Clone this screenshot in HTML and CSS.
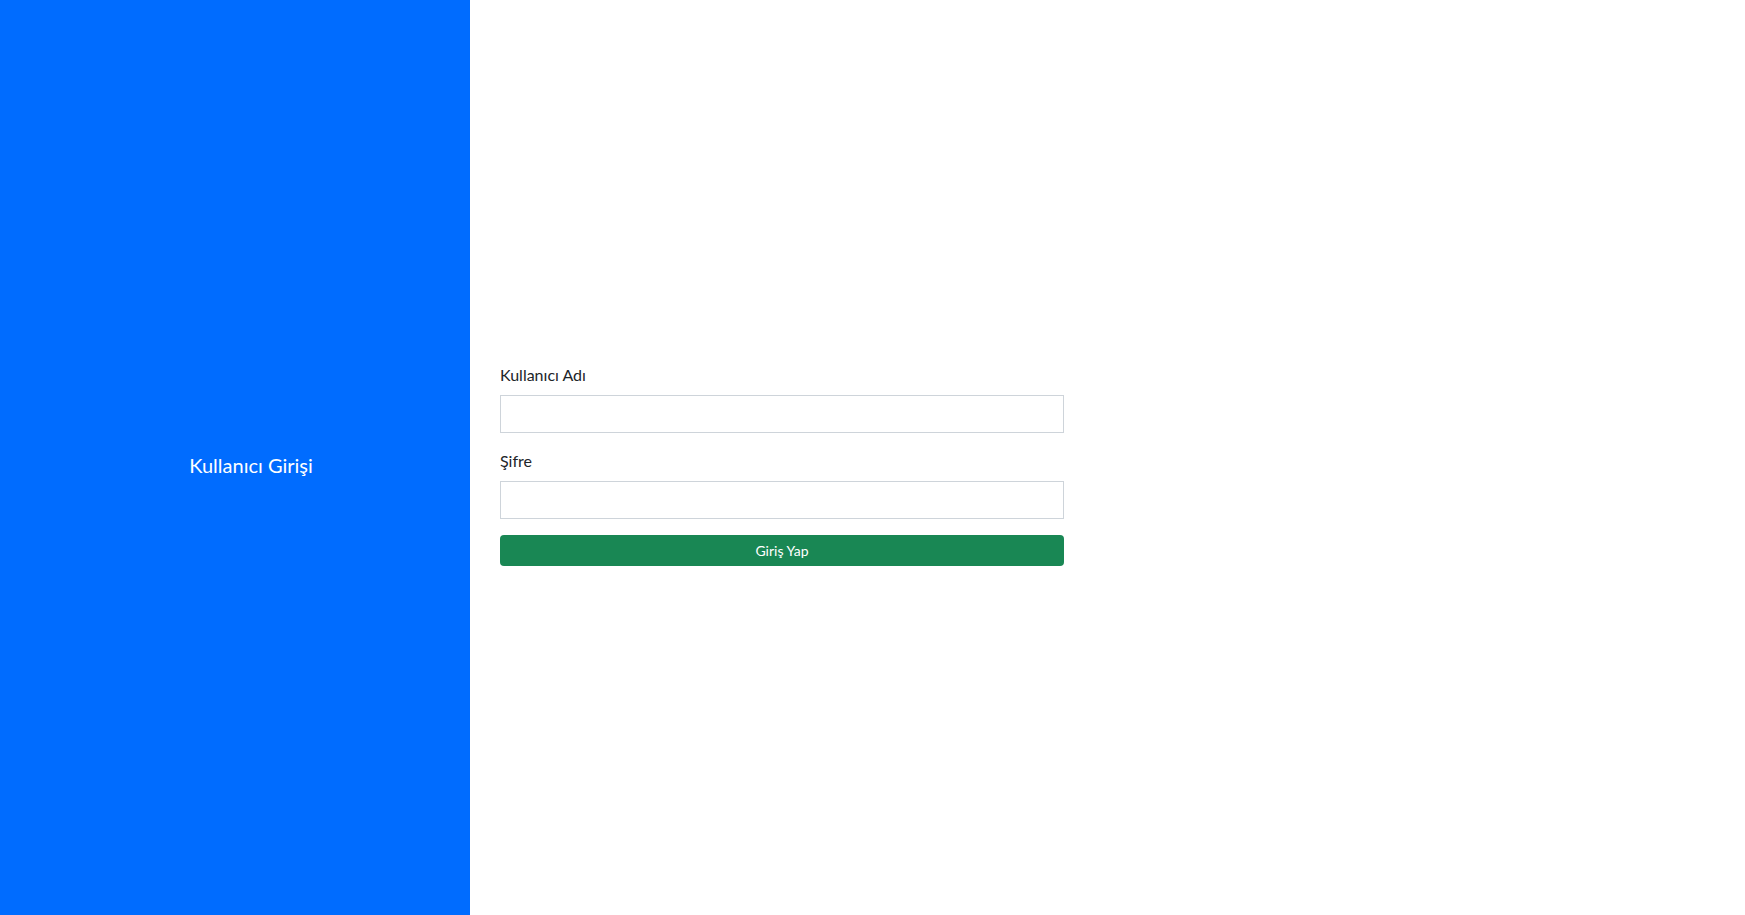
FILE: index.html
```html
<!DOCTYPE html>
<html lang="tr">
<head>
<meta charset="utf-8">
<title>Kullanıcı Girişi</title>
<link rel="stylesheet" href="styles.css">
</head>
<body>
<div class="page">
  <aside class="side">
    <h5 class="side-title">Kullanıcı Girişi</h5>
  </aside>
  <main class="main">
    <form class="login">
      <div class="field">
        <label class="label" for="u">Kullanıcı Adı</label>
        <input class="input" id="u" type="text">
      </div>
      <div class="field">
        <label class="label" for="p">Şifre</label>
        <input class="input" id="p" type="password">
      </div>
      <button class="btn" type="button">Giriş Yap</button>
    </form>
  </main>
</div>
</body>
</html>
```

FILE: styles.css
```css
* { box-sizing: border-box; }
html, body { margin: 0; height: 100%; }
body {
  font-family: Lato, "Noto Sans", sans-serif;
  color: #212529;
  background: #fff;
}
.page {
  display: flex;
  height: 915px;
}
.side {
  width: 470px;
  flex: none;
  background: #006cff;
  display: flex;
  justify-content: center;
  padding-left: 32px;
  padding-top: 453px;
}
.side-title {
  margin: 0;
  font-size: 20px;
  font-weight: 400;
  line-height: 24px;
  color: #fff;
}
.main {
  flex: 1;
  padding-left: 30px;
  padding-top: 363px;
}
.login {
  width: 564px;
  display: flex;
  flex-direction: column;
}
.field {
  display: flex;
  flex-direction: column;
  margin-bottom: 16px;
}
.label {
  font-size: 16px;
  line-height: 24px;
  margin-bottom: 8px;
}
.input {
  height: 38px;
  border: 1px solid #ced4da;
  border-radius: 0;
  padding: 6px 12px;
  font: inherit;
  background: #fff;
}
.btn {
  height: 31px;
  border: none;
  border-radius: 4px;
  background: #198754;
  color: #fff;
  font-family: inherit;
  font-size: 14px;
  line-height: 21px;
  padding: 4px 8px;
}
```
